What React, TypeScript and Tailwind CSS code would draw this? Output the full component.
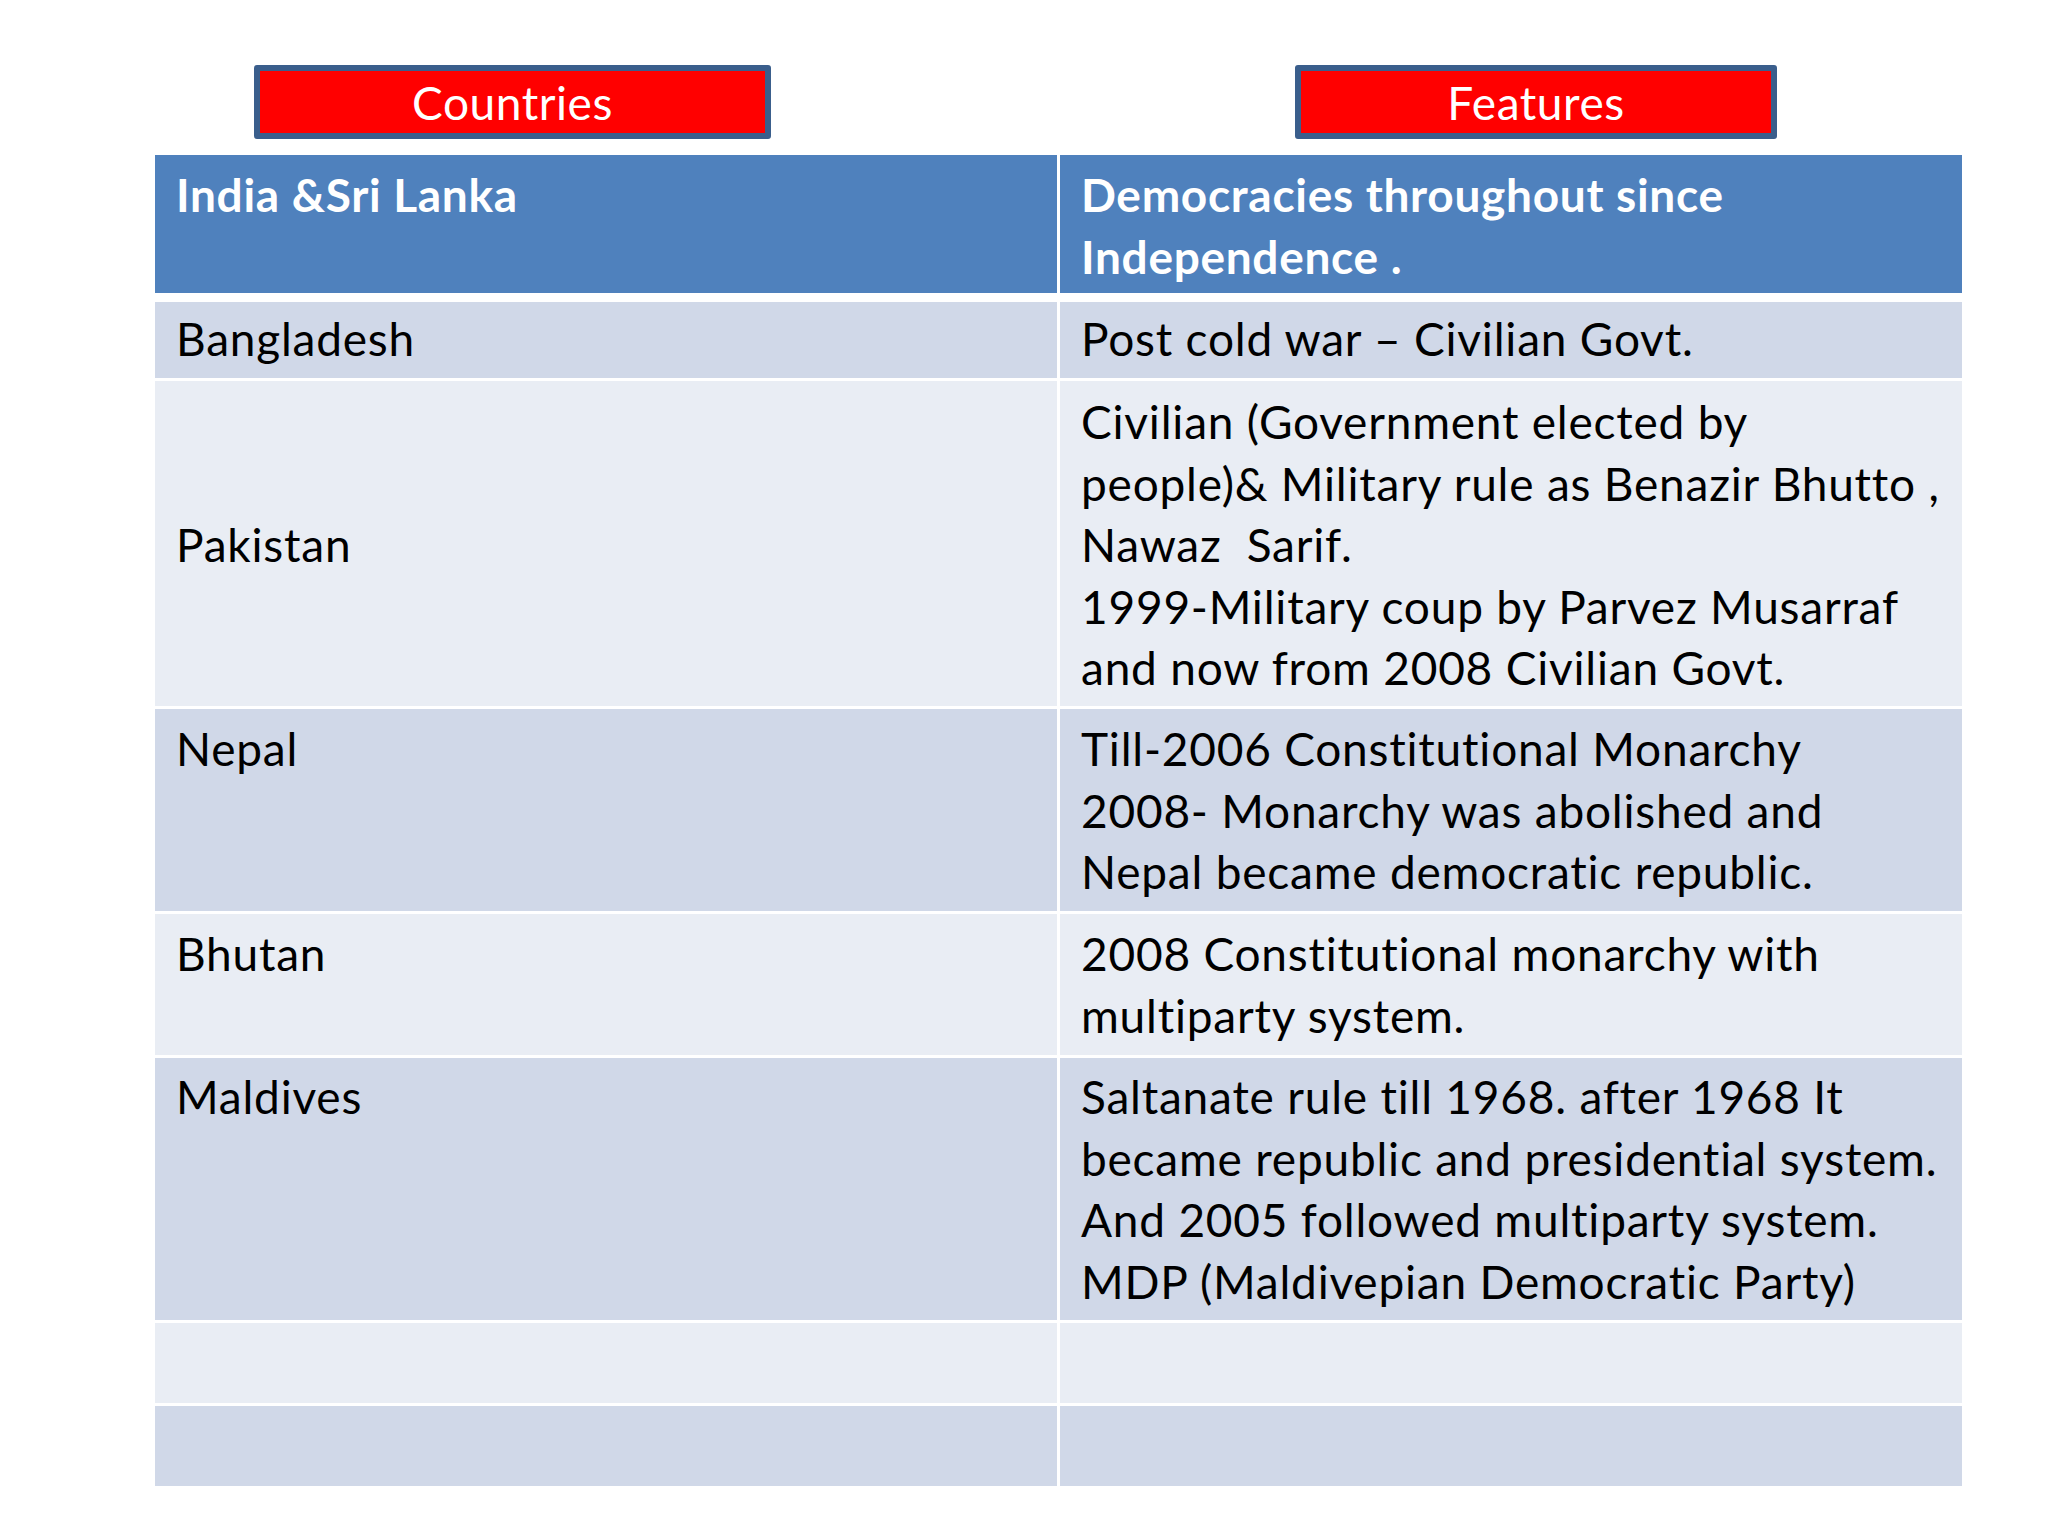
import React from "react";

interface Row {
  country: string[];
  features: string[];
  height: string;
  bg: string;
  pad: string;
}

const rows: Row[] = [
  {
    country: ["Bangladesh"],
    features: ["Post cold war – Civilian Govt."],
    height: "h-[76px]",
    bg: "bg-[#d0d8e8]",
    pad: "pt-[6px]",
  },
  {
    country: ["", "", "Pakistan"],
    features: [
      "Civilian (Government elected by",
      "people)& Military rule as Benazir Bhutto ,",
      "Nawaz  Sarif.",
      "1999-Military coup by Parvez Musarraf",
      "and now from 2008 Civilian Govt.",
    ],
    height: "h-[325px]",
    bg: "bg-[#e9edf4]",
    pad: "pt-[10px]",
  },
  {
    country: ["Nepal"],
    features: [
      "Till-2006 Constitutional Monarchy",
      "2008- Monarchy was abolished and",
      "Nepal became democratic republic.",
    ],
    height: "h-[202px]",
    bg: "bg-[#d0d8e8]",
    pad: "pt-[9px]",
  },
  {
    country: ["Bhutan"],
    features: ["2008 Constitutional monarchy with", "multiparty system."],
    height: "h-[141px]",
    bg: "bg-[#e9edf4]",
    pad: "pt-[9px]",
  },
  {
    country: ["Maldives"],
    features: [
      "Saltanate rule till 1968. after 1968 It",
      "became republic and presidential system.",
      "And 2005 followed multiparty system.",
      "MDP (Maldivepian Democratic Party)",
    ],
    height: "h-[262px]",
    bg: "bg-[#d0d8e8]",
    pad: "pt-[8px]",
  },
  { country: [], features: [], height: "h-[80px]", bg: "bg-[#e9edf4]", pad: "pt-[8px]" },
  { country: [], features: [], height: "h-[80px]", bg: "bg-[#d0d8e8]", pad: "pt-[8px]" },
];

function Lines({ lines }: { lines: string[] }) {
  return (
    <div className="flex flex-col">
      {lines.map((line, i) => (
        <div key={i} className="whitespace-pre h-[61.5px] leading-[61.5px]">
          {line || " "}
        </div>
      ))}
    </div>
  );
}

export default function App() {
  return (
    <div className="w-[2048px] h-[1536px] bg-white font-['Lato',sans-serif] text-[46px] tracking-[0.017em] text-black">
      <div className="flex pt-[65px] pl-[254px] gap-[524px] tracking-[0.012em]">
        <div className="w-[517px] h-[74px] bg-[#ff0000] border-[6px] border-[#3a5e8c] rounded-[3px] flex items-center justify-center text-white">
          Countries
        </div>
        <div className="w-[482px] h-[74px] bg-[#ff0000] border-[6px] border-[#3a5e8c] rounded-[3px] flex items-center justify-center text-white">
          Features
        </div>
      </div>

      <div className="ml-[155px] mt-[16px] w-[1807px] flex flex-col">
        <div className="flex h-[138px] gap-[3px] mb-[9px] font-bold text-white tracking-[0.015em]">
          <div className="flex-1 bg-[#4f81bd] pl-[21px] pt-[9px]">
            <Lines lines={["India &Sri Lanka"]} />
          </div>
          <div className="flex-1 bg-[#4f81bd] pl-[21px] pt-[9px]">
            <Lines lines={["Democracies throughout since", "Independence ."]} />
          </div>
        </div>

        <div className="flex flex-col gap-[3px]">
          {rows.map((row, i) => (
            <div key={i} className={`flex gap-[3px] ${row.height}`}>
              <div className={`flex-1 pl-[21px] ${row.pad} ${row.bg}`}>
                <Lines lines={row.country} />
              </div>
              <div className={`flex-1 pl-[21px] ${row.pad} ${row.bg}`}>
                <Lines lines={row.features} />
              </div>
            </div>
          ))}
        </div>
      </div>
    </div>
  );
}
